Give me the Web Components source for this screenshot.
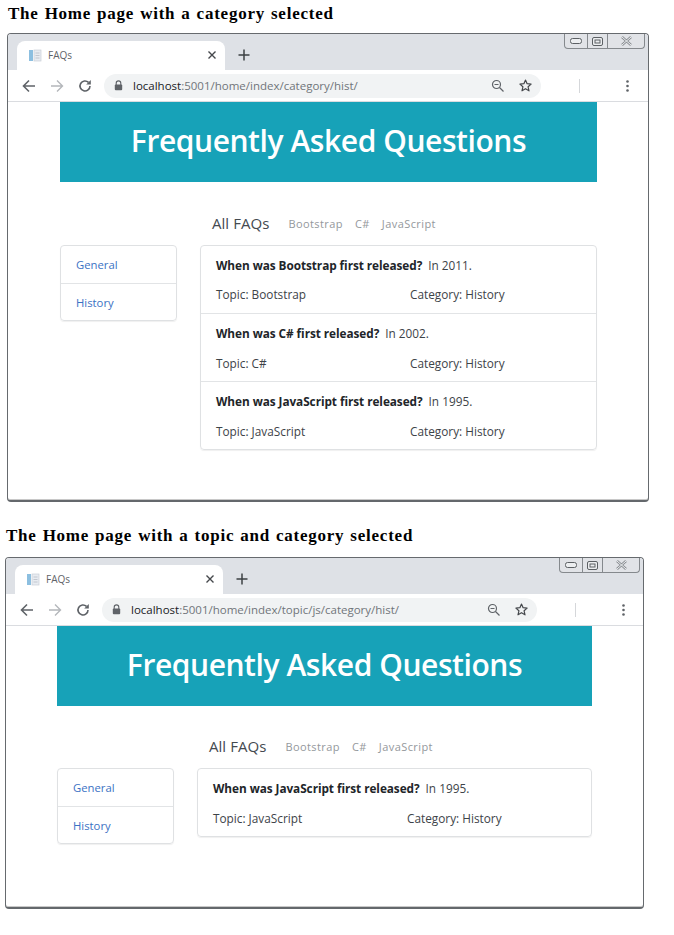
<!DOCTYPE html>
<html>
<head>
<meta charset="utf-8">
<title>FAQs</title>
<style>
html, body { margin: 0; background: #fff; }
.page { display: flex; flex-direction: column; align-items: flex-start; }
</style>
</head>
<body>
<template id="browser-window-tpl">
  <style>
    :host { display: block; box-sizing: border-box; position: relative; background: #fff; border: 1px solid #666a6e; border-bottom: 2px solid #64686c; border-radius: 4px; box-shadow: inset 0 -1px #c8c8c8; overflow: hidden; font-family: "Open Sans", "Liberation Sans", sans-serif; }
    .strip { display: flex; align-items: flex-end; height: 36px; background: #dee1e6; padding-left: 9px; }
    .tab { box-sizing: border-box; display: flex; align-items: center; width: 208px; height: 29px; padding: 0 8px 1px 12px; background: #fff; border-radius: 8px 8px 0 0; font-size: 10px; color: #5f6368; }
    .tab span { flex: 1; margin-left: 6px; }
    .plus { display: block; margin: 0 0 9px 13px; }
    .controls { position: absolute; top: 0; right: 3px; display: flex; height: 14px; border: 1px solid #85898d; border-top: 0; border-radius: 0 0 4px 4px; background: #e1e3e7; }
    .controls div { display: flex; align-items: center; justify-content: center; border-left: 1px solid #85898d; }
    .controls div:first-child { border-left: 0; width: 22px; }
    .controls div:nth-child(2) { width: 19px; }
    .controls div:nth-child(3) { width: 36px; }
    .bar { box-sizing: border-box; display: flex; align-items: center; height: 32px; border-bottom: 1px solid #dadce0; padding: 0 14px 0 14px; }
    .bar svg { display: block; flex: none; }
    .fwd { margin-left: 14px; }
    .reload { margin-left: 14px; }
    .omni { box-sizing: border-box; display: flex; align-items: center; height: 24px; margin-left: 12px; padding: 0 9px 0 10px; background: #f1f3f4; border-radius: 12px; flex: none; width: var(--omni-width, 437px); font-size: 11.5px; color: #70757a; white-space: nowrap; }
    .omni b { font-weight: 400; color: #202124; }
    .url { flex: 1; margin-left: 10px; }
    .sep { width: 1px; height: 14px; background: #d5d7da; margin-left: 38px; }
    .dots { margin-left: 46px; }
    .content { box-sizing: border-box; padding: 0 var(--pad-right, 51px) 0 var(--pad-left, 52px); }
  </style>
  <div class="strip">
    <div class="tab">
      <svg width="13" height="13" viewBox="0 0 13 13"><rect x="0" y="1" width="4" height="11" fill="#8cbfe0"/><rect x="5" y="1" width="7" height="11" fill="#e8ecf1" stroke="#c9ced6" stroke-width=".7"/><path d="M6.500 4h4M6.500 6.500h4M6.500 9h4" stroke="#b8bec8" stroke-width=".8"/></svg>
      <span>FAQs</span>
      <svg width="10" height="10" viewBox="0 0 10 10"><path d="M1.500 1.500l7 7M8.500 1.500l-7 7" stroke="#45484c" stroke-width="1.400"/></svg>
    </div>
    <svg class="plus" width="12" height="12" viewBox="0 0 12 12"><path d="M6 .5v11M.5 6h11" stroke="#3c4043" stroke-width="1.500"/></svg>
  </div>
  <div class="controls">
    <div><svg width="12" height="6" viewBox="0 0 12 6"><rect x=".5" y=".5" width="11" height="5" rx="2" fill="#eceef0" stroke="#5c6064"/></svg></div>
    <div><svg width="11" height="9" viewBox="0 0 11 9"><rect x=".5" y=".5" width="10" height="8" rx="1.500" fill="#eceef0" stroke="#5c6064"/><rect x="3" y="3" width="5" height="3" fill="none" stroke="#5c6064"/></svg></div>
    <div><svg width="13" height="10" viewBox="0 0 13 10"><path d="M2 1l9 8M11 1L2 9" stroke="#8a8e92" stroke-width="2.400"/><path d="M2 1l9 8M11 1L2 9" stroke="#eef0f2" stroke-width="1"/></svg></div>
  </div>
  <div class="bar">
    <svg width="14" height="14" viewBox="0 0 14 14"><path d="M13 7H2M7 1.500L1.500 7 7 12.500" fill="none" stroke="#5f6368" stroke-width="1.600"/></svg>
    <svg class="fwd" width="14" height="14" viewBox="0 0 14 14"><path d="M1 7h11M7 1.500L12.500 7 7 12.500" fill="none" stroke="#b4b7bb" stroke-width="1.400"/></svg>
    <svg class="reload" width="14" height="14" viewBox="0 0 14 14"><path d="M12 7a5 5 0 1 1-1.500-3.600" fill="none" stroke="#5f6368" stroke-width="1.600"/><path d="M12.800 1v4.600H8.200z" fill="#5f6368"/></svg>
    <div class="omni">
      <svg width="9" height="11" viewBox="0 0 9 11"><path d="M2.200 5V3.200a2.300 2.300 0 0 1 4.600 0V5" fill="none" stroke="#5f6368" stroke-width="1.100"/><rect x=".8" y="4.600" width="7.400" height="5.600" rx="1" fill="#5f6368"/></svg>
      <span class="url"><b id="host"></b><span id="path"></span></span>
      <svg width="13" height="13" viewBox="0 0 13 13"><circle cx="5.500" cy="5.500" r="4" fill="none" stroke="#5f6368" stroke-width="1.200"/><path d="M8.500 8.500l4 4M3.500 5.500h4" stroke="#5f6368" stroke-width="1.200"/></svg>
      <svg style="margin-left:15px" width="13" height="13" viewBox="0 0 13 13"><path d="M6.500 1l1.600 3.700 4 .4-3 2.700.9 4-3.500-2.100L3 11.800l.9-4-3-2.700 4-.4z" fill="none" stroke="#45484c" stroke-width="1.200" stroke-linejoin="round"/></svg>
    </div>
    <div class="sep"></div>
    <svg class="dots" width="3" height="12" viewBox="0 0 3 12"><circle cx="1.500" cy="1.500" r="1.300" fill="#5f6368"/><circle cx="1.500" cy="6" r="1.300" fill="#5f6368"/><circle cx="1.500" cy="10.500" r="1.300" fill="#5f6368"/></svg>
  </div>
  <div class="content"><slot></slot></div>
</template>

<template id="shot-heading-tpl">
  <style>
    :host { display: block; font: bold 17px/20px "Liberation Serif", serif; letter-spacing: .76px; word-spacing: 1px; color: #000; }
  </style>
  <slot></slot>
</template>

<template id="faq-banner-tpl">
  <style>
    :host { display: flex; box-sizing: border-box; align-items: center; justify-content: center; height: 80px; padding-bottom: 4px; background: #17a2b8; color: #fff; font: 600 30px "Open Sans", "Liberation Sans", sans-serif; letter-spacing: -.43px; }
  </style>
  <slot></slot>
</template>

<template id="faq-layout-tpl">
  <style>
    :host { display: grid; grid-template-columns: 117px 1fr; column-gap: 23px; padding-top: var(--filters-top, 29px); }
    .side { grid-row: 2; margin-top: 10px; }
    .filters { grid-column: 2; }
    .main { grid-column: 2; grid-row: 2; margin-top: 10px; }
  </style>
  <div class="filters"><slot name="filters"></slot></div>
  <div class="side"><slot name="side"></slot></div>
  <div class="main"><slot></slot></div>
</template>

<template id="topic-filters-tpl">
  <style>
    :host { display: flex; align-items: center; height: 24px; padding-left: 12px; font: 11px "Open Sans", "Liberation Sans", sans-serif; letter-spacing: .42px; color: #94989c; }
    .all { font-size: 15px; color: #444a50; margin-right: 7px; letter-spacing: .05px; }
    ::slotted(span) { margin-right: 12px; }
  </style>
  <span class="all"><slot name="all"></slot></span>
  <slot></slot>
</template>

<template id="side-menu-tpl">
  <style>
    :host { display: block; border: 1px solid #dfe1e3; border-radius: 4px; box-shadow: 0 1px 1px #f0f0f0; }
  </style>
  <slot></slot>
</template>

<template id="side-link-tpl">
  <style>
    :host { display: flex; box-sizing: border-box; align-items: center; height: 37px; padding-left: 15px; font: 11.3px "Open Sans", "Liberation Sans", sans-serif; color: #3b72c4; border-top: 1px solid #e2e4e6; }
    :host(:first-child) { border-top: 0; }
  </style>
  <slot></slot>
</template>

<template id="faq-card-tpl">
  <style>
    :host { display: block; border: 1px solid #dfe1e3; border-radius: 4px; box-shadow: 0 1px 1px #f0f0f0; }
  </style>
  <slot></slot>
</template>

<template id="faq-item-tpl">
  <style>
    :host { display: block; box-sizing: border-box; height: 68px; padding: 0 15px; border-top: 1px solid #e2e4e6; font: 11.8px "Open Sans", "Liberation Sans", sans-serif; color: #3d4348; }
    :host(:first-child) { border-top: 0; height: 67px; }
    .q { display: flex; align-items: center; height: 37px; }
    .q b { color: #212529; font-weight: 700; margin-right: 6px; letter-spacing: -.06px; }
    .meta { display: grid; grid-template-columns: 194px 1fr; height: 23px; align-items: center; }
    :host(:first-child) .meta { height: var(--first-meta, 21px); }
  </style>
  <div class="q"><b id="q"></b><span id="a"></span></div>
  <div class="meta"><span id="t"></span><span id="c"></span></div>
</template>

<div class="page">
  <shot-heading style="margin:4px 0 0 8px">The Home page with a category selected</shot-heading>
  <browser-window style="margin:9px 0 0 7px;width:642px;height:469px" host="localhost" path=":5001/home/index/category/hist/">
    <faq-banner>Frequently Asked Questions</faq-banner>
    <faq-layout>
      <topic-filters slot="filters"><span slot="all">All FAQs</span><span>Bootstrap</span><span>C#</span><span>JavaScript</span></topic-filters>
      <side-menu slot="side"><side-link>General</side-link><side-link>History</side-link></side-menu>
      <faq-card>
        <faq-item question="When was Bootstrap first released?" answer="In 2011." topic="Bootstrap" category="History"></faq-item>
        <faq-item question="When was C# first released?" answer="In 2002." topic="C#" category="History"></faq-item>
        <faq-item question="When was JavaScript first released?" answer="In 1995." topic="JavaScript" category="History"></faq-item>
      </faq-card>
    </faq-layout>
  </browser-window>
  <shot-heading style="margin:24px 0 0 6px">The Home page with a topic and category selected</shot-heading>
  <browser-window style="margin:11px 0 0 5px;width:639px;height:352px;--omni-width:435px;--pad-left:51px;--filters-top:28px;--first-meta:23px" host="localhost" path=":5001/home/index/topic/js/category/hist/">
    <faq-banner>Frequently Asked Questions</faq-banner>
    <faq-layout>
      <topic-filters slot="filters"><span slot="all">All FAQs</span><span>Bootstrap</span><span>C#</span><span>JavaScript</span></topic-filters>
      <side-menu slot="side"><side-link>General</side-link><side-link>History</side-link></side-menu>
      <faq-card>
        <faq-item question="When was JavaScript first released?" answer="In 1995." topic="JavaScript" category="History"></faq-item>
      </faq-card>
    </faq-layout>
  </browser-window>
</div>

<script>
class TemplateElement extends HTMLElement {
    constructor() {
        super();
        const tpl = document.getElementById(this.localName + '-tpl');
        this.attachShadow({ mode: 'open' }).appendChild(tpl.content.cloneNode(true));
    }
}

class BrowserWindow extends TemplateElement {
    connectedCallback() {
        this.shadowRoot.getElementById('host').textContent = this.getAttribute('host');
        this.shadowRoot.getElementById('path').textContent = this.getAttribute('path');
    }
}

class FaqItem extends TemplateElement {
    connectedCallback() {
        const root = this.shadowRoot;
        root.getElementById('q').textContent = this.getAttribute('question');
        root.getElementById('a').textContent = this.getAttribute('answer');
        root.getElementById('t').textContent = 'Topic: ' + this.getAttribute('topic');
        root.getElementById('c').textContent = 'Category: ' + this.getAttribute('category');
    }
}

customElements.define('browser-window', BrowserWindow);
customElements.define('faq-item', FaqItem);
['shot-heading', 'faq-banner', 'faq-layout', 'topic-filters', 'side-menu', 'side-link', 'faq-card'].forEach((name) => {
    customElements.define(name, class extends TemplateElement {});
});
</script>
</body>
</html>
